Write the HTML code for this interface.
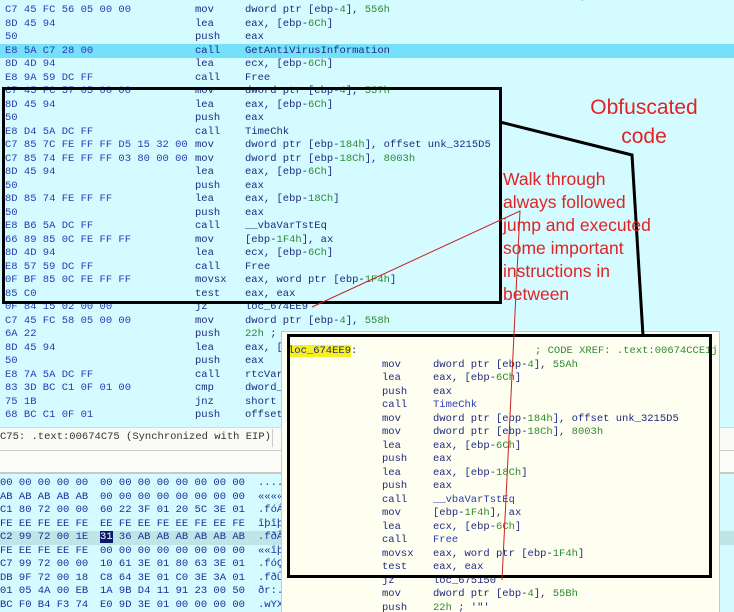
<!DOCTYPE html>
<html style="overflow:hidden;height:612px"><head><meta charset="utf-8"><style>
body{margin:0;width:734px;height:612px;overflow:hidden;background:#d4fbff;position:relative;font-family:"Liberation Mono",monospace;font-size:10.5px}
.r{position:absolute;left:0;height:13.5px;line-height:13.5px;white-space:pre;color:#1c2f9a}
.b{position:absolute;left:5px;color:#2a3cb4}
.m{position:absolute;left:195px;color:#202a80}
.o{position:absolute;left:245px;color:#202a80}
.g{color:#2f8a2f}
.p .m{left:382px}.p .o{left:433px}
.h span{position:absolute}
.ann{position:absolute;font-family:"Liberation Sans",sans-serif;color:#e02424}
</style></head><body>
<div style="position:absolute;left:0;top:44px;width:734px;height:14px;background:#74e0fa"></div>
<div class="r" style="top:-9px"><span class="o g" style="left:580px">; CODE XREF: .text:00674...</span></div>
<div class="r" style="top:4.25px"><span class="b">C7 45 FC 56 05 00 00</span><span class="m">mov</span><span class="o">dword ptr [ebp-<span class="g">4</span>], <span class="g">556h</span></span></div>
<div class="r" style="top:17.75px"><span class="b">8D 45 94</span><span class="m">lea</span><span class="o">eax, [ebp-<span class="g">6Ch</span>]</span></div>
<div class="r" style="top:31.25px"><span class="b">50</span><span class="m">push</span><span class="o">eax</span></div>
<div class="r" style="top:44.75px"><span class="b">E8 5A C7 28 00</span><span class="m">call</span><span class="o">GetAntiVirusInformation</span></div>
<div class="r" style="top:58.25px"><span class="b">8D 4D 94</span><span class="m">lea</span><span class="o">ecx, [ebp-<span class="g">6Ch</span>]</span></div>
<div class="r" style="top:71.75px"><span class="b">E8 9A 59 DC FF</span><span class="m">call</span><span class="o">Free</span></div>
<div class="r" style="top:85.25px"><span class="b">C7 45 FC 57 05 00 00</span><span class="m">mov</span><span class="o">dword ptr [ebp-<span class="g">4</span>], <span class="g">557h</span></span></div>
<div class="r" style="top:98.75px"><span class="b">8D 45 94</span><span class="m">lea</span><span class="o">eax, [ebp-<span class="g">6Ch</span>]</span></div>
<div class="r" style="top:112.25px"><span class="b">50</span><span class="m">push</span><span class="o">eax</span></div>
<div class="r" style="top:125.75px"><span class="b">E8 D4 5A DC FF</span><span class="m">call</span><span class="o">TimeChk</span></div>
<div class="r" style="top:139.25px"><span class="b">C7 85 7C FE FF FF D5 15 32 00</span><span class="m">mov</span><span class="o">dword ptr [ebp-<span class="g">184h</span>], offset unk_3215D5</span></div>
<div class="r" style="top:152.75px"><span class="b">C7 85 74 FE FF FF 03 80 00 00</span><span class="m">mov</span><span class="o">dword ptr [ebp-<span class="g">18Ch</span>], <span class="g">8003h</span></span></div>
<div class="r" style="top:166.25px"><span class="b">8D 45 94</span><span class="m">lea</span><span class="o">eax, [ebp-<span class="g">6Ch</span>]</span></div>
<div class="r" style="top:179.75px"><span class="b">50</span><span class="m">push</span><span class="o">eax</span></div>
<div class="r" style="top:193.25px"><span class="b">8D 85 74 FE FF FF</span><span class="m">lea</span><span class="o">eax, [ebp-<span class="g">18Ch</span>]</span></div>
<div class="r" style="top:206.75px"><span class="b">50</span><span class="m">push</span><span class="o">eax</span></div>
<div class="r" style="top:220.25px"><span class="b">E8 B6 5A DC FF</span><span class="m">call</span><span class="o">__vbaVarTstEq</span></div>
<div class="r" style="top:233.75px"><span class="b">66 89 85 0C FE FF FF</span><span class="m">mov</span><span class="o">[ebp-<span class="g">1F4h</span>], ax</span></div>
<div class="r" style="top:247.25px"><span class="b">8D 4D 94</span><span class="m">lea</span><span class="o">ecx, [ebp-<span class="g">6Ch</span>]</span></div>
<div class="r" style="top:260.75px"><span class="b">E8 57 59 DC FF</span><span class="m">call</span><span class="o">Free</span></div>
<div class="r" style="top:274.25px"><span class="b">0F BF 85 0C FE FF FF</span><span class="m">movsx</span><span class="o">eax, word ptr [ebp-<span class="g">1F4h</span>]</span></div>
<div class="r" style="top:287.75px"><span class="b">85 C0</span><span class="m">test</span><span class="o">eax, eax</span></div>
<div class="r" style="top:301.25px"><span class="b">0F 84 15 02 00 00</span><span class="m">jz</span><span class="o">loc_674EE9</span></div>
<div class="r" style="top:314.75px"><span class="b">C7 45 FC 58 05 00 00</span><span class="m">mov</span><span class="o">dword ptr [ebp-<span class="g">4</span>], <span class="g">558h</span></span></div>
<div class="r" style="top:328.25px"><span class="b">6A 22</span><span class="m">push</span><span class="o"><span class="g">22h</span> ;</span></div>
<div class="r" style="top:341.75px"><span class="b">8D 45 94</span><span class="m">lea</span><span class="o">eax, [</span></div>
<div class="r" style="top:355.25px"><span class="b">50</span><span class="m">push</span><span class="o">eax</span></div>
<div class="r" style="top:368.75px"><span class="b">E8 7A 5A DC FF</span><span class="m">call</span><span class="o">rtcVar</span></div>
<div class="r" style="top:382.25px"><span class="b">83 3D BC C1 0F 01 00</span><span class="m">cmp</span><span class="o">dword_</span></div>
<div class="r" style="top:395.75px"><span class="b">75 1B</span><span class="m">jnz</span><span class="o">short</span></div>
<div class="r" style="top:409.25px"><span class="b">68 BC C1 0F 01</span><span class="m">push</span><span class="o">offset</span></div>
<div style="position:absolute;left:0;top:427px;width:734px;height:22px;background:#fafaf6;border-top:1px solid #d8d8d8;border-bottom:2px solid #c8c8c8"></div>
<div style="position:absolute;left:0;top:431px;font-family:'Liberation Mono',monospace;font-size:10.5px;color:#333;white-space:pre">C75: .text:00674C75 (Synchronized with EIP)</div>
<div style="position:absolute;left:272px;top:429px;width:1px;height:18px;background:#ccc"></div>
<div style="position:absolute;left:0;top:451px;width:734px;height:21px;background:#fbfbf8;border-bottom:2px solid #c8c8c8"></div>
<div style="position:absolute;left:0;top:531px;width:734px;height:14px;background:#bfe6e6"></div>
<div class="r h" style="top:477px"><span style="left:0">00 00 00 00 00</span><span style="left:100px">00 00 00 00 00 00 00 00</span><span style="left:258px">....</span></div>
<div class="r h" style="top:490.5px"><span style="left:0">AB AB AB AB AB</span><span style="left:100px">00 00 00 00 00 00 00 00</span><span style="left:258px">««««</span></div>
<div class="r h" style="top:504px"><span style="left:0">C1 80 72 00 00</span><span style="left:100px">60 22 3F 01 20 5C 3E 01</span><span style="left:258px">.fóÁ</span></div>
<div class="r h" style="top:517.5px"><span style="left:0">FE EE FE EE FE</span><span style="left:100px">EE FE EE FE EE FE EE FE</span><span style="left:258px">îþîþ</span></div>
<div class="r h" style="top:531px"><span style="left:0">C2 99 72 00 1E</span><span style="left:100px"><span style="position:static;background:#0a1a6a;color:#fff">31</span> 36 AB AB AB AB AB AB</span><span style="left:258px">.fðÂ</span></div>
<div class="r h" style="top:544.5px"><span style="left:0">FE EE FE EE FE</span><span style="left:100px">00 00 00 00 00 00 00 00</span><span style="left:258px">««îþ</span></div>
<div class="r h" style="top:558px"><span style="left:0">C7 99 72 00 00</span><span style="left:100px">10 61 3E 01 80 63 3E 01</span><span style="left:258px">.fóÇ</span></div>
<div class="r h" style="top:571.5px"><span style="left:0">DB 9F 72 00 18</span><span style="left:100px">C8 64 3E 01 C0 3E 3A 01</span><span style="left:258px">.fðÛ</span></div>
<div class="r h" style="top:585px"><span style="left:0">01 05 4A 00 EB</span><span style="left:100px">1A 9B D4 11 91 23 00 50</span><span style="left:258px">ðr:.</span></div>
<div class="r h" style="top:598.5px"><span style="left:0">BC F0 B4 F3 74</span><span style="left:100px">E0 9D 3E 01 00 00 00 00</span><span style="left:258px">.wYX</span></div>
<div style="position:absolute;left:281px;top:331px;width:437px;height:281px;background:#fefff0;border-left:1px solid #c8c8c8;border-right:1px solid #c8c8c8;border-top:1px solid #c8c8c8"></div>
<div style="position:absolute;left:0;top:331px;width:734px;height:281px;overflow:hidden">
<div style="position:relative;top:-331px">
<div class="r p" style="top:345px"><span class="o" style="left:288px;color:#202a80"><span style="background:#f6f020">loc_674EE9</span>:</span><span class="o g" style="left:535px">; CODE XREF: .text:00674CCE1j</span></div>
<div class="r p" style="top:358.5px"><span class="m">mov</span><span class="o">dword ptr [ebp-<span class="g">4</span>], <span class="g">55Ah</span></span></div>
<div class="r p" style="top:372px"><span class="m">lea</span><span class="o">eax, [ebp-<span class="g">6Ch</span>]</span></div>
<div class="r p" style="top:385.5px"><span class="m">push</span><span class="o">eax</span></div>
<div class="r p" style="top:399px"><span class="m">call</span><span class="o" style="color:#2a3cb4">TimeChk</span></div>
<div class="r p" style="top:412.5px"><span class="m">mov</span><span class="o">dword ptr [ebp-<span class="g">184h</span>], offset unk_3215D5</span></div>
<div class="r p" style="top:426px"><span class="m">mov</span><span class="o">dword ptr [ebp-<span class="g">18Ch</span>], <span class="g">8003h</span></span></div>
<div class="r p" style="top:439.5px"><span class="m">lea</span><span class="o">eax, [ebp-<span class="g">6Ch</span>]</span></div>
<div class="r p" style="top:453px"><span class="m">push</span><span class="o">eax</span></div>
<div class="r p" style="top:466.5px"><span class="m">lea</span><span class="o">eax, [ebp-<span class="g">18Ch</span>]</span></div>
<div class="r p" style="top:480px"><span class="m">push</span><span class="o">eax</span></div>
<div class="r p" style="top:493.5px"><span class="m">call</span><span class="o" style="color:#2a3cb4">__vbaVarTstEq</span></div>
<div class="r p" style="top:507px"><span class="m">mov</span><span class="o">[ebp-<span class="g">1F4h</span>], ax</span></div>
<div class="r p" style="top:520.5px"><span class="m">lea</span><span class="o">ecx, [ebp-<span class="g">6Ch</span>]</span></div>
<div class="r p" style="top:534px"><span class="m">call</span><span class="o" style="color:#2a3cb4">Free</span></div>
<div class="r p" style="top:547.5px"><span class="m">movsx</span><span class="o">eax, word ptr [ebp-<span class="g">1F4h</span>]</span></div>
<div class="r p" style="top:561px"><span class="m">test</span><span class="o">eax, eax</span></div>
<div class="r p" style="top:574.5px"><span class="m">jz</span><span class="o">loc_675150</span></div>
<div class="r p" style="top:588px"><span class="m">mov</span><span class="o">dword ptr [ebp-<span class="g">4</span>], <span class="g">55Bh</span></span></div>
<div class="r p" style="top:601.5px"><span class="m">push</span><span class="o"><span class="g">22h</span> ; '"'</span></div>
</div></div>
<div style="position:absolute;left:2px;top:87px;width:494px;height:211px;border:3px solid #000"></div>
<div style="position:absolute;left:287px;top:334px;width:419px;height:238px;border:3px solid #000"></div>
<svg style="position:absolute;left:0;top:0" width="734" height="612">
<polyline points="500,122 632,155 643,336" fill="none" stroke="#000" stroke-width="3"/>
<polyline points="312,307 520,211 502,580" fill="none" stroke="#c82020" stroke-width="1"/>
</svg>
<div class="ann" style="left:576px;top:93px;width:136px;text-align:center;font-size:21px;line-height:29px">Obfuscated<br>code</div>
<div class="ann" style="left:503px;top:168px;font-size:17.5px;line-height:23px;white-space:pre">Walk through
always followed
jump and executed
some important
instructions in
between</div>
</body></html>
